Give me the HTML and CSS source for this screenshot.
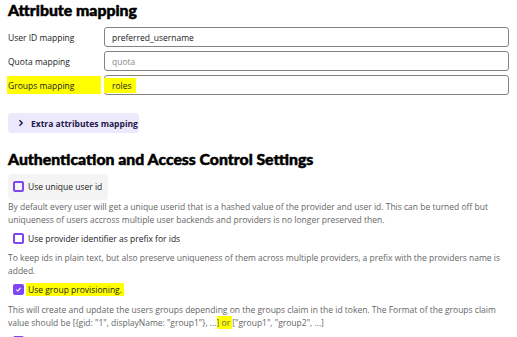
FILE: index.html
```html
<!DOCTYPE html>
<html>
<head>
<meta charset="utf-8">
<link rel="stylesheet" href="styles.css">
</head>
<body>
<div class="page">
  <h2 class="heading">Attribute mapping</h2>
  <div class="rows">
    <div class="row">
      <label class="label">User ID mapping</label>
      <div class="input">preferred_username</div>
    </div>
    <div class="row">
      <label class="label">Quota mapping</label>
      <div class="input placeholder">quota</div>
    </div>
    <div class="row">
      <label class="label"><mark class="hl hl-label">Groups mapping</mark></label>
      <div class="input"><mark class="hl hl-value">roles</mark></div>
    </div>
  </div>
  <button class="extra"><span class="chev">
    <svg width="8" height="8" viewBox="0 0 8 8"><path d="M2.5 1.3 L5.2 4 L2.5 6.7" fill="none" stroke="#1c1848" stroke-width="1.4"/></svg>
  </span>Extra attributes mapping</button>

  <h2 class="heading heading2">Authentication and Access Control Settings</h2>

  <div class="check-row hover">
    <span class="box"></span><span class="check-label">Use unique user id</span>
  </div>
  <p class="desc">By default every user will get a unique userid that is a hashed value of the provider and user id. This can be turned off but uniqueness of users accross multiple user backends and providers is no longer preserved then.</p>

  <div class="check-row">
    <span class="box"></span><span class="check-label">Use provider identifier as prefix for ids</span>
  </div>
  <p class="desc">To keep ids in plain text, but also preserve uniqueness of them across multiple providers, a prefix with the providers name is added.</p>

  <div class="check-row">
    <span class="box checked"><svg width="9" height="9" viewBox="0 0 10 10"><path d="M2 5.2 L4.1 7.2 L8 2.8" fill="none" stroke="#fff" stroke-width="1.6"/></svg></span><mark class="hl check-label hl-check">Use group provisioning.</mark>
  </div>
  <p class="desc">This will create and update the users groups depending on the groups claim in the id token. The Format of the groups claim value should be [{gid: "1", displayName: "group1"}, ...<mark class="hl hl-or">] or </mark>["group1", "group2", ...]</p>

  <div class="check-row">
    <span class="box"></span><span class="check-label">Use group provisioning for admins</span>
  </div>
</div>
</body>
</html>
```
FILE: styles.css
```css
html, body {
  margin: 0;
  padding: 0;
  background: #ffffff;
  overflow: hidden;
}
.page {
  width: 501px;
  padding: 0 8px;
  font-family: "Open Sans", "Noto Sans", sans-serif;
  font-size: 8.5px;
  color: #222222;
}
.heading {
  margin: 0;
  font-family: Lato, "Noto Sans", sans-serif;
  font-weight: 900;
  font-size: 15.8px;
  line-height: 20px;
  color: #000;
  -webkit-text-stroke: 0.5px #000;
}
.rows {
  margin-top: 7px;
  display: flex;
  flex-direction: column;
  gap: 4px;
}
.row {
  display: flex;
  align-items: center;
  height: 20px;
}
.label {
  width: 96px;
  flex: none;
  color: #222;
}
.input {
  flex: 1;
  height: 20px;
  box-sizing: border-box;
  border: 1px solid #838383;
  border-radius: 3px;
  padding: 0 7px;
  display: flex;
  align-items: center;
  color: #222;
}
.placeholder { color: #8a8a8a; }
.hl {
  background: #ffff00;
  color: inherit;
  padding: 0;
}
.hl-label {
  display: flex;
  align-items: center;
  box-sizing: border-box;
  width: 94px;
  height: 18px;
  margin-left: -1px;
  padding-left: 1px;
}
.hl-value {
  display: flex;
  align-items: center;
  height: 15px;
  margin-left: -8px;
  padding: 0 4px 0 8px;
}
.extra {
  margin-top: 18px;
  display: flex;
  align-items: center;
  height: 20px;
  width: 131px;
  border: none;
  border-radius: 4px;
  background: #ede9fc;
  padding: 0 0 0 9px;
  font-family: "Open Sans", "Noto Sans", sans-serif;
  font-weight: 700;
  font-size: 8.5px;
  white-space: nowrap;
  color: #1c1848;
}
.chev {
  display: inline-flex;
  width: 14px;
}
.heading2 {
  margin-top: 16px;
  margin-bottom: 5px;
}
.check-row {
  display: flex;
  align-items: center;
  height: 25.5px;
  width: fit-content;
  padding: 0 6px 0 5px;
  border-radius: 4px;
}
.check-row.hover {
  background: #f4f4f4;
}
.box {
  width: 11px;
  height: 11px;
  box-sizing: border-box;
  border: 2px solid #7f47f2;
  border-radius: 2px;
  margin-right: 4px;
  display: inline-flex;
  align-items: center;
  justify-content: center;
}
.box.checked {
  background: #7f47f2;
}
.check-label {
  color: #222;
}
.hl-check {
  display: flex;
  align-items: center;
  height: 13px;
  padding: 0 2px 0 2px;
  margin-left: -2px;
}
.desc {
  margin: 0;
  line-height: 13px;
  color: #666666;
}
.hl-or {
  padding: 1px 0;
}
```
